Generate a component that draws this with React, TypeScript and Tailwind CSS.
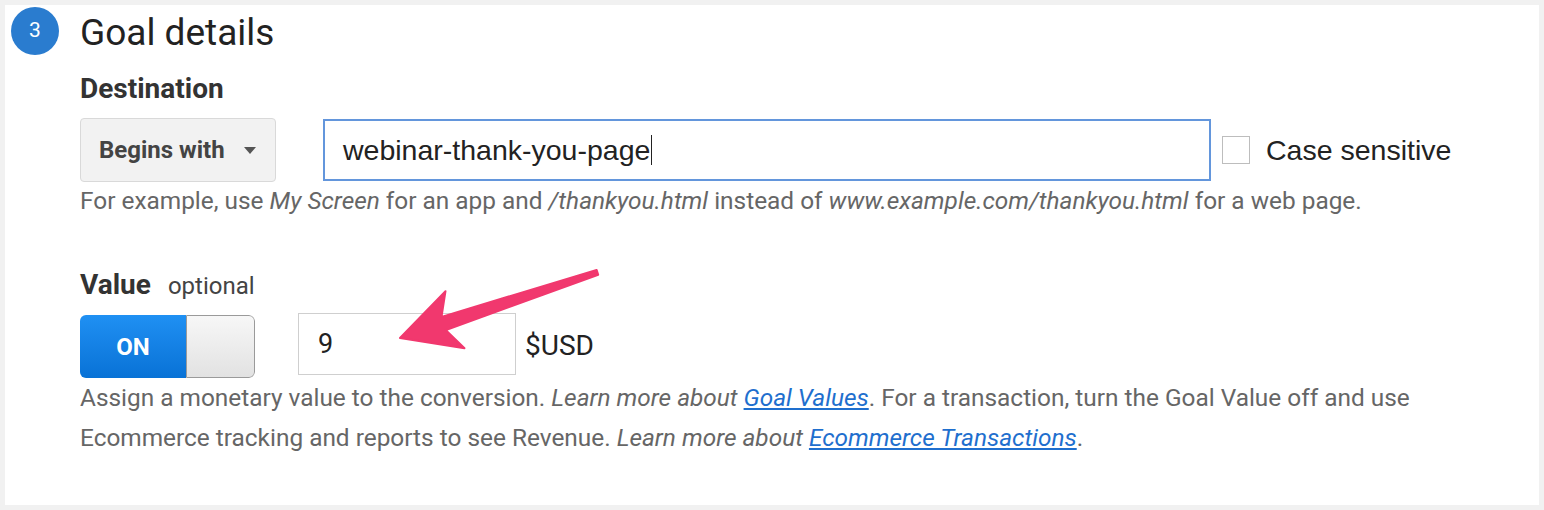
import React from "react";

const roboto = { fontFamily: "Roboto, 'Liberation Sans', sans-serif" };
const arial = { fontFamily: "'Liberation Sans', Arial, sans-serif" };

function StepBadge({ n }: { n: number }) {
  return (
    <div className="ml-[6px] mt-[2px] flex h-[48px] w-[48px] shrink-0 items-center justify-center rounded-full bg-[#2a7ccf] text-[21px] text-white">
      {n}
    </div>
  );
}

function Arrow() {
  return (
    <svg
      className="pointer-events-none absolute left-0 top-0"
      width="1544"
      height="510"
      viewBox="0 0 1544 510"
    >
      <polygon
        points="596.6,269.9 441.5,316.9 445.5,291.2 400,338 464.5,348.2 445.9,330.1 598.2,274.7"
        fill="#f1386e"
        stroke="#f1386e"
        strokeWidth="2"
        strokeLinejoin="round"
      />
    </svg>
  );
}

export default function App() {
  return (
    <div
      className="relative h-[510px] w-[1544px] overflow-hidden bg-[#f1f1f1] p-[5px]"
      style={roboto}
    >
      <div className="h-[500px] w-[1534px] bg-white">
        <div className="flex items-start">
          <StepBadge n={3} />
          <h2 className="ml-[21px] mt-[4px] text-[37px] leading-[48px] text-[#222]">
            Goal details
          </h2>
        </div>

        <div className="pl-[75px]">
          <div className="mt-[16px] text-[28px] font-bold leading-[32px] text-[#333]">
            Destination
          </div>

          <div className="mt-[13px] flex items-center">
            <div className="flex h-[64px] w-[196px] items-center rounded-[4px] border border-[#d9d9d9] bg-[#f2f2f2] pl-[18px]">
              <span className="text-[24px] font-bold text-[#444]">Begins with</span>
              <span className="ml-[19px] h-0 w-0 border-x-[6px] border-t-[7px] border-x-transparent border-t-[#555]" />
            </div>
            <div
              className="ml-[47px] flex h-[62px] w-[888px] items-center border-2 border-[#6396dc] pl-[18px] text-[28.5px] text-[#222]"
              style={arial}
            >
              webinar-thank-you-page
              <span className="ml-[1px] h-[30px] w-[1px] bg-[#222]" />
            </div>
            <div className="ml-[11px] h-[28px] w-[28px] border border-[#bdbdbd] bg-white" />
            <span className="ml-[16px] text-[28.5px] text-[#222]" style={arial}>
              Case sensitive
            </span>
          </div>

          <p className="-mt-[1px] text-[24.4px] leading-[40px] text-[#666]">
            For example, use <i>My Screen</i> for an app and <i>/thankyou.html</i>{" "}
            instead of <i>www.example.com/thankyou.html</i> for a web page.
          </p>

          <div className="mt-[48px] flex items-baseline">
            <span className="text-[28px] font-bold leading-[32px] text-[#333]">Value</span>
            <span className="ml-[17px] text-[24px] leading-[32px] text-[#444]">optional</span>
          </div>

          <div className="mt-[11px] flex items-start">
            <div className="mt-[2px] flex h-[63px] w-[175px] overflow-hidden rounded-[6px]">
              <div className="flex w-[106px] items-center justify-center bg-gradient-to-b from-[#1f90f3] to-[#0872d6] text-[24px] font-bold text-white">
                ON
              </div>
              <div className="flex-1 rounded-r-[6px] border border-[#9a9a9a] bg-gradient-to-b from-[#f7f7f7] to-[#e2e2e2]" />
            </div>
            <div className="ml-[43px] flex h-[62px] w-[218px] items-center border border-[#cfcfcf] pl-[19px] text-[27px] text-[#222]">
              9
            </div>
            <span className="ml-[9px] self-center text-[28px] text-[#222]">$USD</span>
          </div>

          <p className="text-[24.4px] leading-[40px] text-[#666]">
            Assign a monetary value to the conversion.{" "}
            <i>
              Learn more about{" "}
              <a className="text-[#1f6fce] underline">Goal Values</a>
            </i>
            . For a transaction, turn the Goal Value off and use
            <br />
            Ecommerce tracking and reports to see Revenue.{" "}
            <i>
              Learn more about{" "}
              <a className="text-[#1f6fce] underline">Ecommerce Transactions</a>
            </i>
            .
          </p>
        </div>
      </div>
      <Arrow />
    </div>
  );
}
